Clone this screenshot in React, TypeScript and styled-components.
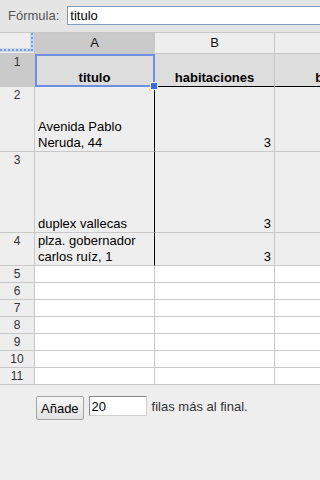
import React from "react";
import styled, { createGlobalStyle } from "styled-components";

type Align = "left" | "center" | "right";
type Tone = "title" | "band" | "plain";

interface CellData {
  text: string;
  align: Align;
}

interface RowData {
  tone: Tone;
  cells: CellData[];
}

const columns = ["A", "B", "C"];

const rows: RowData[] = [
  {
    tone: "title",
    cells: [
      { text: "titulo", align: "center" },
      { text: "habitaciones", align: "center" },
      { text: "baños", align: "center" },
    ],
  },
  {
    tone: "band",
    cells: [
      { text: "Avenida Pablo Neruda, 44", align: "left" },
      { text: "3", align: "right" },
      { text: "", align: "left" },
    ],
  },
  {
    tone: "band",
    cells: [
      { text: "duplex vallecas", align: "left" },
      { text: "3", align: "right" },
      { text: "", align: "left" },
    ],
  },
  {
    tone: "band",
    cells: [
      { text: "plza. gobernador carlos ruíz, 1", align: "left" },
      { text: "3", align: "right" },
      { text: "", align: "left" },
    ],
  },
  ...Array.from({ length: 7 }, () => ({
    tone: "plain" as Tone,
    cells: [
      { text: "", align: "left" as Align },
      { text: "", align: "left" as Align },
      { text: "", align: "left" as Align },
    ],
  })),
];

const toneBg: Record<Tone, string> = {
  title: "#dddddd",
  band: "#eeeeee",
  plain: "#ffffff",
};

const justify: Record<Align, string> = {
  left: "flex-start",
  center: "center",
  right: "flex-end",
};

const App = () => {
  return (
    <>
      <GlobalStyle />
      <Page>
        <FormulaBar>
          <FormulaLabel>Fórmula:</FormulaLabel>
          <FormulaInput defaultValue="titulo" />
        </FormulaBar>

        <Sheet>
          <Corner />
          {columns.map((col, i) => (
            <ColumnHead key={col} $selected={i === 0}>
              {col}
            </ColumnHead>
          ))}

          {rows.map((row, r) => (
            <React.Fragment key={r}>
              <RowHead $selected={r === 0}>{r + 1}</RowHead>
              {row.cells.map((cell, c) => (
                <Cell
                  key={c}
                  $bg={toneBg[row.tone]}
                  $align={cell.align}
                  $bold={row.tone === "title"}
                  $edgeRight={c === 0 && row.tone === "band"}
                  $edgeBottom={row.tone === "title"}
                >
                  {cell.text && <CellText $align={cell.align}>{cell.text}</CellText>}
                  {r === 0 && c === 0 && (
                    <Selection>
                      <FillHandle />
                    </Selection>
                  )}
                </Cell>
              ))}
            </React.Fragment>
          ))}
        </Sheet>

        <AddRows>
          <AddButton>Añade</AddButton>
          <CountInput defaultValue="20" />
          <AddLabel>filas más al final.</AddLabel>
        </AddRows>
      </Page>
    </>
  );
};

export default App;

const GlobalStyle = createGlobalStyle`
  html, body {
    margin: 0;
    padding: 0;
    background: #eeeeee;
    overflow: hidden;
  }
  body {
    font-family: "Liberation Sans", Arial, sans-serif;
    font-size: 13px;
    color: #000;
  }
`;

const Page = styled.div`
  width: 320px;
  height: 480px;
  overflow: hidden;
  background: #eeeeee;
`;

const FormulaBar = styled.div`
  height: 33px;
  box-sizing: border-box;
  display: flex;
  align-items: center;
  gap: 8px;
  padding: 0 0 1px 8px;
  background: #e5e5e5;
  border-bottom: 1px solid #c8c8c8;
`;

const FormulaLabel = styled.span`
  color: #555555;
  font-size: 13px;
`;

const FormulaInput = styled.input`
  flex: 1;
  height: 19px;
  box-sizing: border-box;
  margin-right: -4px;
  padding: 0 2px;
  border: 1px solid #7f9db9;
  background: #ffffff;
  font-family: "Liberation Sans", Arial, sans-serif;
  font-size: 13px;
  color: #000;
  outline: none;
`;

const Sheet = styled.div`
  display: grid;
  grid-template-columns: 35px 120px 120px 120px;
  grid-template-rows: 21px 33px 65px 81px 33px repeat(7, 17px);
  width: 395px;
`;

const Corner = styled.div`
  position: relative;
  box-sizing: border-box;
  background: #eeeeee;
  border-right: 1px solid #c8c8c8;
  border-bottom: 1px solid #c8c8c8;

  &::before {
    content: "";
    position: absolute;
    left: 0;
    right: 3px;
    bottom: 1px;
    height: 4px;
    background: repeating-linear-gradient(90deg, #7b9be0 0 2px, transparent 2px 4px) center / 100% 2px no-repeat,
      #c9d8f4;
  }

  &::after {
    content: "";
    position: absolute;
    top: 0;
    right: 0;
    bottom: 1px;
    width: 4px;
    background: repeating-linear-gradient(180deg, #7b9be0 0 2px, transparent 2px 4px) center / 2px 100% no-repeat,
      #c9d8f4;
  }
`;

const ColumnHead = styled.div<{ $selected?: boolean }>`
  box-sizing: border-box;
  display: flex;
  align-items: center;
  justify-content: center;
  padding-bottom: 1px;
  background: ${({ $selected }) => ($selected ? "#cacaca" : "#eeeeee")};
  border-right: 1px solid #c8c8c8;
  border-bottom: 1px solid #c8c8c8;
  color: #111;
  font-size: 13px;
`;

const RowHead = styled.div<{ $selected?: boolean }>`
  box-sizing: border-box;
  display: flex;
  justify-content: center;
  align-items: flex-start;
  padding-top: 1px;
  line-height: 15px;
  background: ${({ $selected }) => ($selected ? "#cacaca" : "#eeeeee")};
  border-right: 1px solid #c8c8c8;
  border-bottom: 1px solid #c8c8c8;
  color: #333;
  font-size: 12px;
`;

const Cell = styled.div<{
  $bg: string;
  $align: Align;
  $bold?: boolean;
  $edgeRight?: boolean;
  $edgeBottom?: boolean;
}>`
  position: relative;
  box-sizing: border-box;
  display: flex;
  align-items: flex-end;
  justify-content: ${({ $align }) => justify[$align]};
  padding: 0 3px;
  min-width: 0;
  background: ${({ $bg }) => $bg};
  border-right: 1px solid ${({ $edgeRight }) => ($edgeRight ? "#000" : "#c8c8c8")};
  border-bottom: 1px solid ${({ $edgeBottom }) => ($edgeBottom ? "#000" : "#c8c8c8")};
  font-weight: ${({ $bold }) => ($bold ? 700 : 400)};
  font-size: 13px;
  line-height: 16px;
`;

const CellText = styled.span<{ $align: Align }>`
  text-align: ${({ $align }) => $align};
  white-space: normal;
`;

const Selection = styled.div`
  position: absolute;
  top: 0;
  left: 0;
  right: -1px;
  bottom: -1px;
  border: 2px solid #6d8ee0;
  pointer-events: none;
  z-index: 1;
`;

const FillHandle = styled.div`
  position: absolute;
  right: -5px;
  bottom: -5px;
  width: 6px;
  height: 6px;
  background: #3a6bd6;
  border: 1px solid #ffffff;
`;

const AddRows = styled.div`
  display: flex;
  align-items: center;
  gap: 5px;
  padding: 11px 0 0 36px;
`;

const AddButton = styled.button`
  height: 24px;
  padding: 0 4px;
  border: 1px solid #a3a3a3;
  border-radius: 2px;
  background: linear-gradient(#f7f7f7, #e2e2e2);
  font-family: "Liberation Sans", Arial, sans-serif;
  font-size: 13px;
  color: #000;
`;

const CountInput = styled.input`
  width: 58px;
  height: 20px;
  box-sizing: border-box;
  margin-top: -4px;
  padding: 0 2px;
  border: 1px solid #d0d0d0;
  border-top-color: #8a8a8a;
  border-left-color: #8a8a8a;
  background: #ffffff;
  font-family: "Liberation Sans", Arial, sans-serif;
  font-size: 13px;
  color: #000;
  outline: none;
`;

const AddLabel = styled.span`
  margin-top: -4px;
  color: #333;
  font-size: 13px;
`;
